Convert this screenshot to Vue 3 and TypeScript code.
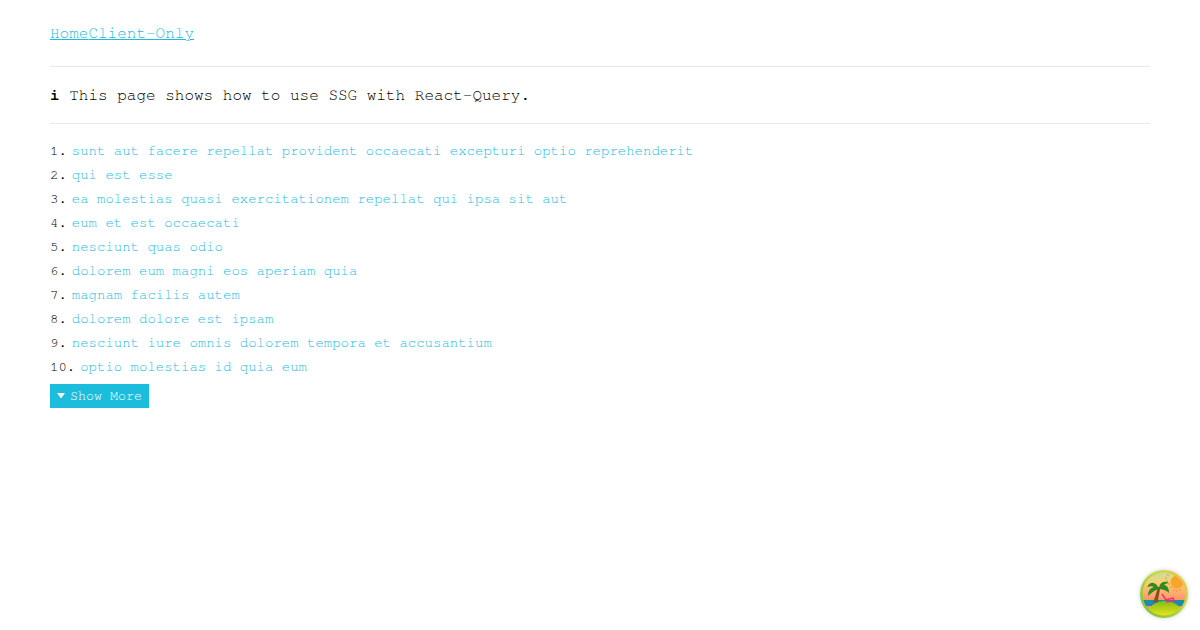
<script setup lang="ts">
const posts: string[] = [
  'sunt aut facere repellat provident occaecati excepturi optio reprehenderit',
  'qui est esse',
  'ea molestias quasi exercitationem repellat qui ipsa sit aut',
  'eum et est occaecati',
  'nesciunt quas odio',
  'dolorem eum magni eos aperiam quia',
  'magnam facilis autem',
  'dolorem dolore est ipsam',
  'nesciunt iure omnis dolorem tempora et accusantium',
  'optio molestias id quia eum',
]
const rays: [number, number][] = [[26, 8], [28, 5], [31, 3], [27, 11], [29, 14], [31, 17], [34, 20], [37, 21], [40, 20]]
</script>

<template>
  <main class="page">
    <nav class="nav"><a href="#">Home</a><a href="#">Client-Only</a></nav>
    <hr class="rule" />
    <p class="info"><b>i</b> This page shows how to use SSG with React-Query.</p>
    <hr class="rule" />
    <ol class="list">
      <li v-for="(post, i) in posts" :key="post" class="row">
        <span class="num">{{ i + 1 }}.</span>
        <a href="#" class="post">{{ post }}</a>
      </li>
    </ol>
    <button class="more" type="button">
      <svg class="caret" width="8" height="6" viewBox="0 0 8 6"><path d="M0 0h8L4 5.500z" fill="#fff" /></svg>
      <span>Show More</span>
    </button>
  </main>
  <button class="logo" type="button" aria-label="Open devtools">
    <svg width="48" height="48" viewBox="0 0 48 48">
      <defs>
        <linearGradient id="ring" x1="1" y1="0" x2="0" y2="1">
          <stop offset="0" stop-color="#fdbe48" />
          <stop offset="0.4" stop-color="#c0dc40" />
          <stop offset="1" stop-color="#6cc030" />
        </linearGradient>
        <linearGradient id="sky" x1="0" y1="0" x2="0" y2="1">
          <stop offset="0" stop-color="#b4e4b0" />
          <stop offset="0.26" stop-color="#fdd070" />
          <stop offset="0.66" stop-color="#fd8f6c" />
        </linearGradient>
        <linearGradient id="hill" x1="0" y1="0" x2="0" y2="1">
          <stop offset="0" stop-color="#84bc14" />
          <stop offset="1" stop-color="#f4ec1c" />
        </linearGradient>
        <clipPath id="disc"><circle cx="24" cy="24" r="21.500" /></clipPath>
      </defs>
      <circle cx="24" cy="24" r="24" fill="url(#ring)" />
      <g clip-path="url(#disc)">
        <rect width="48" height="48" fill="url(#sky)" />
        <path d="M28 0h20v22z" fill="#fdb83c" opacity="0.75" />
        <circle cx="37" cy="12" r="6.500" fill="#f7a52c" />
        <circle v-for="[x, y] in rays" :key="`${x}-${y}`" :cx="x" :cy="y" r="0.8" fill="#f08a30" />
        <rect y="30" width="48" height="3" fill="#16929a" />
        <rect y="33" width="48" height="3" fill="#1f86bc" />
        <path d="M3 48C8 37 15 31 25 31s17 6 21 17z" fill="url(#hill)" />
        <path d="M17.500 17c-.5 5-2.500 10-4.500 15.500h4.500c1-5 2-10.500 3-15.500z" fill="#8a4f24" />
        <path d="M19 19C16 11 10 11 7 17c3-1 5-1 7 0-4 1-6 4-6 9 3-3 7-6 11-7zM19 19c0-7 6-9 10-6-2 0-4 1-5 2 3 0 5 3 5 8-3-3-7-4-10-4z" fill="#2f8a22" />
        <path d="M22 24l4 6 7-2 1 3-8 1" fill="none" stroke="#e8336f" stroke-width="1.4" />
      </g>
    </svg>
  </button>
</template>

<style>
body { background: #fff; }
</style>

<style scoped>
.page {
  padding: 24px 50px 0;
  font-family: FreeMono, "Liberation Mono", monospace;
  color: #000;
}
.nav {
  display: flex;
  font-size: 16px;
  line-height: 19px;
}
.nav a {
  color: #1cbcdc;
  text-decoration: underline;
}
.rule {
  border: 0;
  border-top: 1px solid #e8e8e8;
  margin: 0;
}
.nav + .rule { margin-top: 23px; }
.info {
  margin: 0;
  padding: 19px 0 18px;
  font-size: 16px;
  line-height: 19px;
}
.list {
  list-style: none;
  margin: 0;
  padding: 15px 0 0;
  font-size: 14px;
  line-height: 24px;
}
.row {
  display: flex;
  gap: 5px;
}
.post {
  color: #1cbcdc;
  text-decoration: none;
}
.more {
  display: flex;
  align-items: center;
  gap: 5px;
  height: 24px;
  margin-top: 5px;
  padding: 0 7px;
  border: 0;
  background: #1cbcdc;
  color: #fff;
  font-family: FreeMono, "Liberation Mono", monospace;
  font-size: 13.33px;
}
.logo {
  position: fixed;
  right: 12px;
  bottom: 12px;
  width: 48px;
  height: 48px;
  padding: 0;
  border: 0;
  border-radius: 50%;
  background: none;
  box-shadow: 0 0 4px rgba(0, 0, 0, 0.2);
}
.logo svg { display: block; }
</style>
